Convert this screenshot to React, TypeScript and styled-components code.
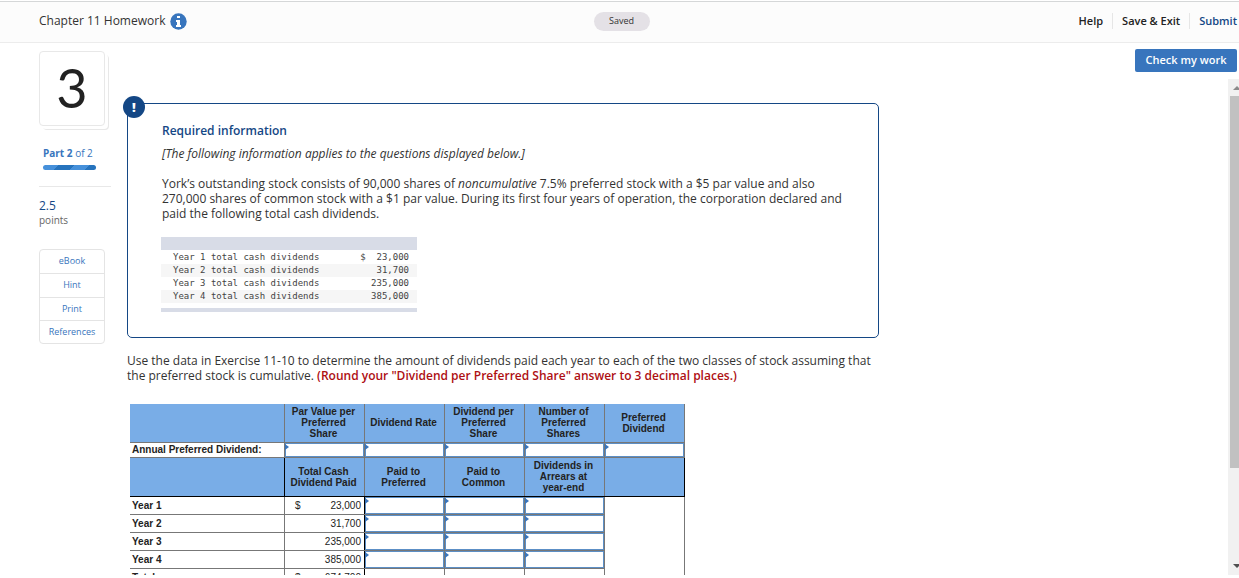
import React from "react";
import styled, { createGlobalStyle, css } from "styled-components";

const navy = "#144785";
const blue = "#3875bd";

const GlobalStyle = createGlobalStyle`
  *, *::before, *::after { box-sizing: border-box; }
  html, body { margin: 0; background: #fff; }
  body { font-family: "Open Sans", "Noto Sans", sans-serif; font-size: 12px; line-height: 15px; color: #333; overflow: hidden; }
  button, input { font-family: inherit; margin: 0; }
  p, h1, h2 { margin: 0; }
`;

const Page = styled.div`
  height: 100vh;
  display: flex;
  flex-direction: column;
  padding: 1px 0 3px;
`;

const Header = styled.header`
  flex: none;
  height: 42px;
  display: grid;
  grid-template-columns: 1fr auto 1fr;
  align-items: center;
  background: #fcfcfc;
  border-top: 1px solid #d5d7d8;
  border-bottom: 1px solid #ececec;
  padding: 0 0 2px 39px;
`;

const TitleGroup = styled.div`
  display: flex;
  align-items: center;
  gap: 5px;
`;

const Title = styled.h1`
  font-size: 12px;
  line-height: 18px;
  font-weight: 400;
`;

const IconButton = styled.button`
  display: flex;
  border: 0;
  padding: 0;
  background: none;
`;

const SavedPill = styled.span`
  width: 56px;
  height: 19px;
  margin-right: 35px;
  border-radius: 10px;
  background: #e4e1e6;
  font-size: 9px;
  line-height: 17px;
  text-align: center;
`;

const HeaderNav = styled.nav`
  display: flex;
  justify-content: flex-end;
`;

const NavLink = styled.a<{ $accent?: boolean }>`
  padding: 0 9px;
  font-size: 11px;
  line-height: 16px;
  font-weight: 600;
  color: ${(p) => (p.$accent ? navy : "#222")};
  text-decoration: none;
  & + & { border-left: 1px solid #e6e6e6; }
  &:last-child { padding-right: 2px; }
`;

const Body = styled.div`
  flex: 1;
  min-height: 0;
  display: flex;
  overflow: hidden;
`;

const Sidebar = styled.aside`
  flex: none;
  width: 127px;
  padding: 8px 16px 0 39px;
`;

const QuestionCard = styled.div`
  width: 66px;
  height: 75px;
  border: 1px solid #e8e8e8;
  border-radius: 4px;
  background: #fff;
  box-shadow: 3px 3px 0 0 #fff, 4px 4px 0 0 #e8e8e8;
  font-family: Lato, sans-serif;
  font-size: 54px;
  line-height: 72px;
  text-align: center;
  color: #222;
`;

const PartLabel = styled.p`
  margin: 20px 0 4px 4px;
  font-size: 10px;
  line-height: 15px;
  color: ${blue};
`;

const Progress = styled.div`
  width: 53px;
  height: 5px;
  margin-left: 4px;
  border-radius: 3px;
  background: repeating-linear-gradient(135deg, #4690da 0 11px, #2673bd 11px 22px);
`;

const Points = styled.div`
  width: 72px;
  margin-top: 16px;
  padding-top: 12px;
  border-top: 1px solid #e8e8e8;
  font-size: 10px;
  line-height: 14px;
  color: #666;
`;

const PointsValue = styled.div`
  font-size: 12px;
  color: ${navy};
`;

const ToolList = styled.nav`
  display: grid;
  grid-auto-rows: 1fr;
  width: 66px;
  height: 95px;
  margin-top: 22px;
  border: 1px solid #e4e4e4;
  border-radius: 4px;
`;

const ToolLink = styled.a`
  font-size: 9px;
  line-height: 21px;
  text-align: center;
  text-decoration: none;
  color: ${blue};
  & + & { border-top: 1px solid #e4e4e4; }
`;

const Main = styled.main`
  flex: 1;
  min-width: 0;
  padding-top: 60px;
`;

const InfoBox = styled.section`
  position: relative;
  max-width: 752px;
  padding: 19px 32px 25px 34px;
  border: 1px solid ${navy};
  border-radius: 5px;
`;

const AlertBadge = styled.span`
  position: absolute;
  left: -5px;
  top: -8px;
  width: 22px;
  height: 22px;
  border-radius: 50%;
  background: ${navy};
  color: #fff;
  font-size: 13px;
  line-height: 22px;
  font-weight: 800;
  text-align: center;
`;

const InfoTitle = styled.h2`
  font-size: 12px;
  line-height: 15px;
  font-weight: 600;
  color: ${navy};
`;

const Lead = styled.p`
  margin: 8px 0 15px;
  font-style: italic;
`;

const DataTable = styled.table`
  width: 256px;
  margin: 16px 0 0 -1px;
  border-spacing: 0;
  border-top: 13px solid #d8dce7;
  border-bottom: 4px solid #d8dce7;
  padding: 1px 0 5px;
  font-family: "DejaVu Sans Mono", monospace;
  font-size: 9px;
  line-height: 13px;
  color: #444;
  th, td { padding: 0; font-weight: 400; white-space: pre; }
  th { text-align: left; padding-left: 12px; }
  td { text-align: right; padding-right: 8px; }
  tr:nth-child(even) { background: #f6f6f6; }
`;

const Instructions = styled.p`
  max-width: 752px;
  margin: 15px 0 21px;
  strong { color: #ae0f13; font-weight: 600; }
`;

const Worksheet = styled.table`
  width: 555px;
  margin-left: 3px;
  border-collapse: collapse;
  table-layout: fixed;
  font-family: "Liberation Sans", Arial, sans-serif;
  font-size: 10px;
  line-height: 11px;
  color: #222;
`;

const Row = styled.tr<{ $h: number }>`
  height: ${(p) => p.$h}px;
`;

const line = (black?: boolean) => (black ? "#000" : "#777");

const HeadCell = styled.th<{ $left?: "none" | "black"; $lower?: boolean }>`
  padding: 0 4px 0 2px;
  background: #79ade7;
  border-left: ${(p) => (p.$left === "none" ? "0" : `1px solid ${line(p.$left === "black")}`)};
  border-right: 1px solid ${(p) => line(p.$left === "none" && p.$lower)};
  border-bottom: 1px solid ${(p) => line(p.$lower)};
  ${(p) => p.$lower && css`border-top: 1px solid #000;`}
  &:last-child { border-right-color: ${(p) => line(p.$lower)}; }
`;

const RowLabel = styled.th`
  padding: 0 2px;
  text-align: left;
  border-right: 1px solid ${line()};
  border-bottom: 1px solid ${line()};
`;

const Amount = styled.td`
  padding: 0 3px 0 10px;
  border-right: 1px solid #000;
  border-bottom: 1px solid ${line()};
`;

const Money = styled.div`
  display: flex;
  justify-content: space-between;
`;

const AnswerTd = styled.td`
  position: relative;
  padding: 0;
  border: 1px solid ${line()};
  &::before {
    content: "";
    position: absolute;
    left: 0;
    top: 1px;
    border: 3px solid transparent;
    border-left: 4px solid ${blue};
    border-right: 0;
  }
`;

const AnswerInput = styled.input<{ $h: number }>`
  display: block;
  width: 100%;
  height: ${(p) => p.$h}px;
  padding: 0 4px;
  border: 1px solid #5c8fc6;
  border-radius: 0;
  background: #fff;
  font-size: 10px;
  outline: 0;
`;

const SideCell = styled.td`
  border-right: 1px solid ${line()};
`;

const TotalCell = styled.td`
  border: 1px solid ${line()};
  border-top-color: #000;
`;

const Rail = styled.div`
  flex: none;
  width: 104px;
  display: flex;
  flex-direction: column;
  align-items: flex-end;
  padding-top: 6px;
`;

const CheckButton = styled.button`
  width: 102px;
  height: 23px;
  margin-right: 2px;
  border: 0;
  border-radius: 2px;
  padding: 0 0 2px;
  background: ${blue};
  color: #fff;
  font-size: 11px;
  line-height: 21px;
  font-weight: 600;
`;

const Scrollbar = styled.div`
  flex: 1;
  width: 11px;
  margin-top: 7px;
  display: flex;
  flex-direction: column;
  align-items: flex-end;
  background: #f1f1f1;
`;

const Arrow = styled.svg`
  flex: none;
  width: 9px;
  height: 17px;
`;

const Thumb = styled.div`
  width: 9px;
  height: 75%;
  background: #c1c1c1;
  margin-bottom: auto;
`;

const Answer = ({ label, h }: { label: string; h: number }) => (
  <AnswerTd><AnswerInput aria-label={label} $h={h} /></AnswerTd>
);

const dividends = [
  ["1", "23,000"],
  ["2", "31,700"],
  ["3", "235,000"],
  ["4", "385,000"],
];

export default function App() {
  return (
    <Page>
      <GlobalStyle />
      <Header>
        <TitleGroup>
          <Title>Chapter 11 Homework</Title>
          <IconButton aria-label="Assignment information">
            <svg width="17" height="17" viewBox="0 0 17 17">
              <circle cx="8.5" cy="8.5" r="8.2" fill={blue} />
              <path d="M7 3h3v2H7zM6 7h4v5h1v2H6v-2h1V9H6z" fill="#fff" />
            </svg>
          </IconButton>
        </TitleGroup>
        <SavedPill>Saved</SavedPill>
        <HeaderNav>
          <NavLink href="#help">Help</NavLink>
          <NavLink href="#exit">Save &amp; Exit</NavLink>
          <NavLink href="#submit" $accent>Submit</NavLink>
        </HeaderNav>
      </Header>
      <Body>
        <Sidebar>
          <QuestionCard>3</QuestionCard>
          <PartLabel><b>Part 2</b> of 2</PartLabel>
          <Progress />
          <Points><PointsValue>2.5</PointsValue>points</Points>
          <ToolList>
            {["eBook", "Hint", "Print", "References"].map((t) => (
              <ToolLink key={t} href={`#${t.toLowerCase()}`}>{t}</ToolLink>
            ))}
          </ToolList>
        </Sidebar>
        <Main>
          <InfoBox>
            <AlertBadge>!</AlertBadge>
            <InfoTitle>Required information</InfoTitle>
            <Lead>[The following information applies to the questions displayed below.]</Lead>
            <p>
              York’s outstanding stock consists of 90,000 shares of <i>noncumulative</i> 7.5% preferred stock with a $5 par value and also<br />
              270,000 shares of common stock with a $1 par value. During its first four years of operation, the corporation declared and<br />
              paid the following total cash dividends.
            </p>
            <DataTable>
              <tbody>
                {dividends.map(([year, amount], i) => (
                  <tr key={year}>
                    <th scope="row">Year {year} total cash dividends</th>
                    <td>{i === 0 ? "$  " : ""}{amount}</td>
                  </tr>
                ))}
              </tbody>
            </DataTable>
          </InfoBox>
          <Instructions>
            Use the data in Exercise 11-10 to determine the amount of dividends paid each year to each of the two classes of stock assuming that<br />
            the preferred stock is cumulative. <strong>(Round your "Dividend per Preferred Share" answer to 3 decimal places.)</strong>
          </Instructions>
          <Worksheet>
            <colgroup>
              <col />
              {[1, 2, 3, 4, 5].map((c) => <col key={c} width="80" />)}
            </colgroup>
            <tbody>
              <Row $h={38}>
                <HeadCell $left="none" />
                <HeadCell>Par Value per Preferred Share</HeadCell>
                <HeadCell>Dividend Rate</HeadCell>
                <HeadCell>Dividend per Preferred Share</HeadCell>
                <HeadCell>Number of Preferred Shares</HeadCell>
                <HeadCell>Preferred Dividend</HeadCell>
              </Row>
              <Row $h={15}>
                <RowLabel scope="row">Annual Preferred Dividend:</RowLabel>
                {["Par value", "Dividend rate", "Dividend per share", "Number of shares", "Preferred dividend"].map((l) => (
                  <Answer key={l} label={l} h={14} />
                ))}
              </Row>
              <Row $h={39}>
                <HeadCell $left="none" $lower />
                <HeadCell $left="black" $lower>Total Cash Dividend Paid</HeadCell>
                <HeadCell $lower>Paid to<br />Preferred</HeadCell>
                <HeadCell $lower>Paid to<br />Common</HeadCell>
                <HeadCell $lower>Dividends in Arrears at<br />year-end</HeadCell>
                <HeadCell $lower />
              </Row>
              {dividends.map(([year, amount], i) => (
                <Row $h={18} key={year}>
                  <RowLabel scope="row">Year {year}</RowLabel>
                  <Amount><Money><span>{i === 0 ? "$" : ""}</span><span>{amount}</span></Money></Amount>
                  {["Paid to preferred", "Paid to common", "In arrears"].map((l) => (
                    <Answer key={l} label={`${l}, year ${year}`} h={17} />
                  ))}
                  <SideCell />
                </Row>
              ))}
              <Row $h={18}>
                <RowLabel scope="row">Total</RowLabel>
                <Amount><Money><span>$</span><span>674,700</span></Money></Amount>
                <TotalCell />
                <TotalCell />
                <TotalCell />
                <SideCell />
              </Row>
            </tbody>
          </Worksheet>
        </Main>
        <Rail>
          <CheckButton>Check my work</CheckButton>
          <Scrollbar>
            <Arrow viewBox="0 0 9 17"><path d="M3 11l4-4 4 4z" fill="#8b8b8b" /></Arrow>
            <Thumb />
            <Arrow viewBox="0 0 9 17"><path d="M3 6h8l-4 4z" fill="#505050" /></Arrow>
          </Scrollbar>
        </Rail>
      </Body>
    </Page>
  );
}
